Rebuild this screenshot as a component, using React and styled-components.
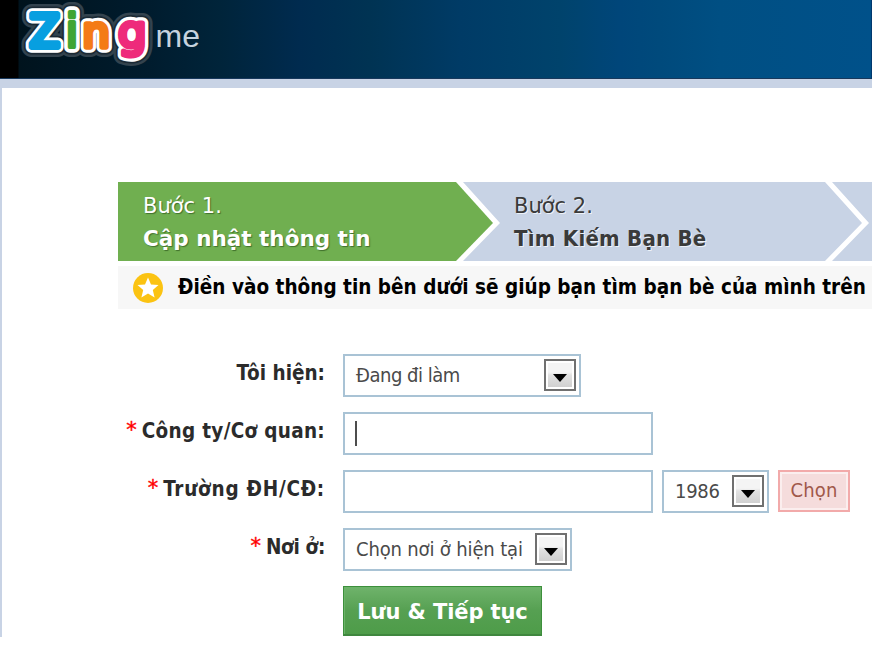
import React from 'react'
import styled, { createGlobalStyle } from 'styled-components'

const GlobalStyle = createGlobalStyle`
    * {
        box-sizing: border-box;
    }

    body {
        margin: 0;
        background: #fff;
        overflow: hidden;
        font-family: "DejaVu Sans Condensed", "DejaVu Sans", sans-serif;
    }
`;

const Page = styled.div`
    width: 872px;
    height: 637px;
    overflow: hidden;
`;

const Header = styled.header`
    height: 79px;
    border-bottom: 1px solid #17385c;
    border-right: 1px solid #00386e;
    background: linear-gradient(90deg, #000 0, #000 18px, #00131d 19px, #001c2e 150px, #00243a 220px, #002b4f 300px, #003353 370px, #003b66 460px, #00436c 560px, #00467a 620px, #004a7c 660px, #004f83 720px, #00518a 872px);
`;

const Logo = styled.svg`
    display: block;
`;

const Main = styled.main`
    height: 558px;
    border-top: 9px solid #c8d3e5;
    border-left: 2px solid #c8d3e5;
    padding: 94px 0 0 116px;
`;

const Steps = styled.div`
    display: flex;
    height: 79px;
`;

const Step = styled.div`
    flex: none;
    width: ${ props => props.$width }px;
    margin-left: ${ props => props.$first ? 0 : -30 }px;
    padding: 10px 0 0 ${ props => props.$first ? 25 : 51 }px;
    color: ${ props => props.$first ? '#fff' : '#3a3a3a' };
    background: ${ props => props.$first ? '#70af50' : '#c8d3e5' };
    text-shadow: ${ props => props.$first ? '1px 1px 1px #40702c' : '1px 1px 0 #eef2f8' };
    clip-path: ${ props => props.$first
        ? 'polygon(0 0, calc(100% - 37px) 0, 100% 41px, calc(100% - 37px) 100%, 0 100%)'
        : 'polygon(0 0, calc(100% - 37px) 0, 100% 41px, calc(100% - 37px) 100%, 0 100%, 37px 41px)' };
`;

const StepNumber = styled.div`
    font-family: "DejaVu Sans", sans-serif;
    font-size: 21px;
    line-height: 28px;
    white-space: nowrap;
`;

const StepTitle = styled.div`
    margin-top: 5px;
    font-family: ${ props => props.$condensed ? '"DejaVu Sans Condensed"' : '"DejaVu Sans"' }, sans-serif;
    font-size: ${ props => props.$condensed ? 22 : 21.5 }px;
    font-weight: bold;
    line-height: 28px;
    letter-spacing: ${ props => props.$condensed ? 0.25 : 0 }px;
    white-space: nowrap;
`;

const Notice = styled.div`
    display: flex;
    align-items: center;
    gap: 15px;
    height: 43px;
    margin-top: 5px;
    padding-left: 15px;
    background: #f7f7f7;
`;

const NoticeText = styled.div`
    padding-bottom: 2px;
    font-size: 20.5px;
    font-weight: bold;
    line-height: 28px;
    letter-spacing: 0.02px;
    white-space: nowrap;
    color: #000;
`;

const Form = styled.form`
    display: flex;
    flex-direction: column;
    gap: 15px;
    margin-top: 45px;
`;

const Row = styled.div`
    display: flex;
    height: 43px;
`;

const Label = styled.label`
    display: flex;
    justify-content: flex-end;
    width: 207px;
    margin-right: 18px;
    font-size: 20.5px;
    font-weight: bold;
    line-height: 39px;
    letter-spacing: ${ props => props.$spacing || 0 }px;
    white-space: nowrap;
    color: #2b2b2b;
`;

const Required = styled.span`
    margin-right: 5px;
    font-family: "DejaVu Sans", sans-serif;
    font-size: 21px;
    line-height: 37px;
    font-weight: normal;
    letter-spacing: 0;
    color: #f00;
    -webkit-text-stroke: 0.4px #f00;
`;

const Field = styled.div`
    display: flex;
    width: ${ props => props.$width }px;
    margin-right: 9px;
    padding: 3px 3px 0 11px;
    border: 2px solid #a9c3d5;
    background: #fff;
`;

const Value = styled.span`
    flex: 1;
    font-size: 20px;
    line-height: 33px;
    letter-spacing: ${ props => props.$spacing || 0 }px;
    white-space: nowrap;
    color: #4a4a4a;
`;

const Caret = styled.span`
    width: 2px;
    height: 25px;
    margin: 4px 0 0 -1px;
    background: #4d4d4d;
`;

const ArrowBox = styled.span`
    display: flex;
    flex: none;
    align-items: center;
    justify-content: center;
    width: 32px;
    height: 32px;
    padding-top: 5px;
    border: 2px solid #707070;
    box-shadow: inset 0 0 0 2px #fff;
    background: linear-gradient(#f4f4f4 40%, #e2e2e2 50%, #cdcdcd);
`;

const ChooseBtn = styled.button`
    width: 72px;
    height: 42px;
    padding: 0 0 3px;
    border: 2px solid #f2aaaa;
    box-shadow: inset 0 0 0 2px #fbeeee;
    background: #f5dcdc;
    font-family: inherit;
    font-size: 20px;
    letter-spacing: 0.2px;
    color: #a0584a;
`;

const SubmitBtn = styled.button`
    width: 199px;
    height: 50px;
    margin-left: 225px;
    padding: 2px 0 0;
    border: 1px solid #3d8f3c;
    border-bottom: 2px solid #3f873e;
    box-shadow: inset 1px 1px 0 #6bb468;
    background: linear-gradient(#6fb36b, #56a052 50%, #4e9c49);
    font-family: "DejaVu Sans", sans-serif;
    font-size: 21px;
    font-weight: bold;
    letter-spacing: -0.1px;
    white-space: nowrap;
    color: #fff;
`;

const letters = [
    { char: 'Z', x: 29.5, size: 44, weight: 6, color: '#079fe0' },
    { char: 'i', x: 65.5, size: 46, weight: 4, color: '#3fa535' },
    { char: 'n', x: 82.5, size: 43, weight: 5.5, color: '#f47b16' },
    { char: 'g', x: 118, size: 45, weight: 5, color: '#ee2a7b' },
];

// outline passes, widest first, so the letters share one halo
const outlines = [
    { color: '#33434e', width: 20 },
    { color: '#1b2a35', width: 15 },
    { color: '#fff', width: 11.5 },
];

function ZingLogo() {
    const font = { fontFamily: 'DejaVu Sans', strokeLinejoin: 'round' };

    return (
        <Logo width="220" height="78" viewBox="0 0 220 78">
            { outlines.map(line => letters.map(l => (
                <text key={ line.width + l.char } x={ l.x } y="47" { ...font } fontSize={ l.size } fill={ line.color } stroke={ line.color } strokeWidth={ line.width }>{ l.char }</text>
            ))) }
            <ellipse cx="130.500" cy="35" rx="5" ry="7" fill="#fff" />
            { letters.map(l => (
                <text key={ l.char } x={ l.x } y="47" { ...font } fontSize={ l.size } fill={ l.color } stroke={ l.color } strokeWidth={ l.weight }>{ l.char }</text>
            )) }
            <text x="155.5" y="46.5" fontFamily="Liberation Sans" fontSize="32" fill="#c6d3df">me</text>
        </Logo>
    )
}

function StarIcon() {
    return (
        <svg width="30" height="30" viewBox="0 0 30 30">
            <circle cx="15" cy="15" r="15" fill="#fbc312" />
            <path d="M15 4.5l3 7 7.5.6-5.700 5 1.800 7.400-6.600-4-6.600 4 1.800-7.400-5.700-5 7.500-.6z" fill="#fff" />
        </svg>
    )
}

function Arrow() {
    return (
        <ArrowBox>
            <svg width="14" height="8" viewBox="0 0 14 8">
                <path d="M0 0h14L7 8z" fill="#000" />
            </svg>
        </ArrowBox>
    )
}

function App() {
    return (
        <Page>
            <GlobalStyle />
            <Header>
                <ZingLogo />
            </Header>
            <Main>
                <Steps>
                    <Step $first $width={ 375 }>
                        <StepNumber>Bước 1.</StepNumber>
                        <StepTitle>Cập nhật thông tin</StepTitle>
                    </Step>
                    <Step $width={ 399 }>
                        <StepNumber>Bước 2.</StepNumber>
                        <StepTitle $condensed>Tìm Kiếm Bạn Bè</StepTitle>
                    </Step>
                    <Step $width={ 399 } />
                </Steps>
                <Notice>
                    <StarIcon />
                    <NoticeText>Điền vào thông tin bên dưới sẽ giúp bạn tìm bạn bè của mình trên</NoticeText>
                </Notice>
                <Form>
                    <Row>
                        <Label>Tôi hiện:</Label>
                        <Field $width={ 238 }>
                            <Value $spacing={ -0.5 }>Đang đi làm</Value>
                            <Arrow />
                        </Field>
                    </Row>
                    <Row>
                        <Label $spacing={ 0.3 }><Required>*</Required>Công ty/Cơ quan:</Label>
                        <Field $width={ 310 }>
                            <Caret />
                        </Field>
                    </Row>
                    <Row>
                        <Label $spacing={ 0.75 }><Required>*</Required>Trường ĐH/CĐ:</Label>
                        <Field $width={ 310 } />
                        <Field $width={ 107 }>
                            <Value $spacing={ -0.3 }>1986</Value>
                            <Arrow />
                        </Field>
                        <ChooseBtn type="button">Chọn</ChooseBtn>
                    </Row>
                    <Row>
                        <Label $spacing={ -0.3 }><Required>*</Required>Nơi ở:</Label>
                        <Field $width={ 229 }>
                            <Value $spacing={ -0.15 }>Chọn nơi ở hiện tại</Value>
                            <Arrow />
                        </Field>
                    </Row>
                    <SubmitBtn type="button">Lưu &amp; Tiếp tục</SubmitBtn>
                </Form>
            </Main>
        </Page>
    )
}

export default App
